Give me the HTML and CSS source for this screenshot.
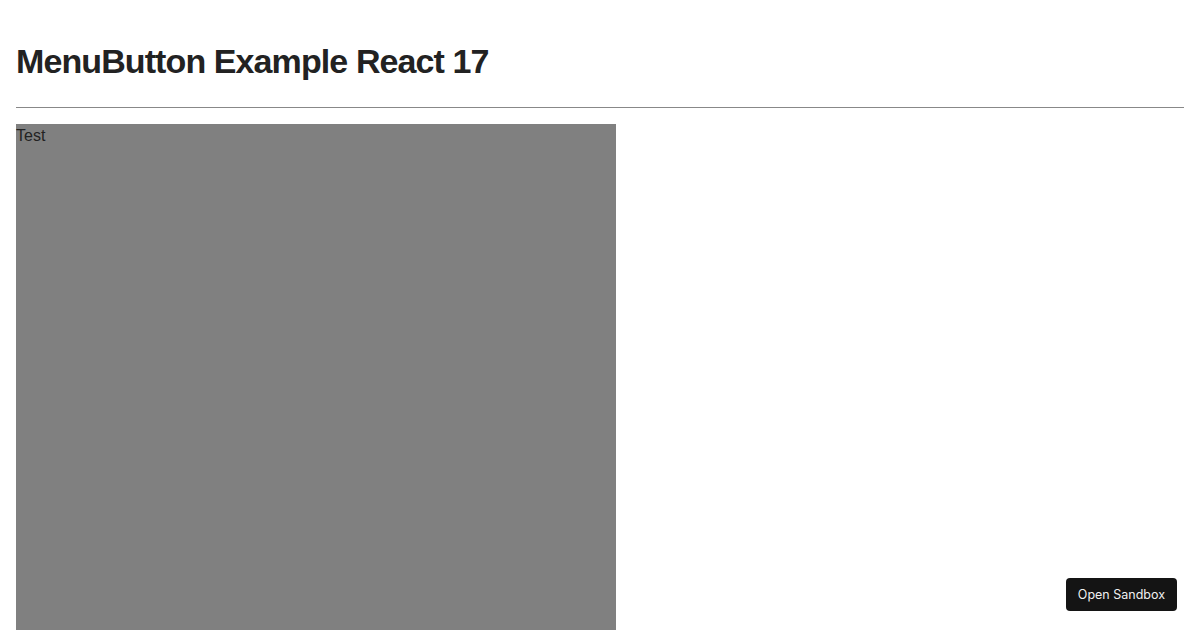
FILE: index.html
```html
<!DOCTYPE html>
<html lang="en">
<head>
  <meta charset="UTF-8" />
  <meta name="viewport" content="width=device-width, initial-scale=1" />
  <title>MenuButton Example React 17</title>
  <link rel="stylesheet" href="styles.css">
</head>
<body>

  <div id="root">
    <h1>MenuButton Example React 17</h1>
    <hr />
    <div class="box">Test</div>
  </div>

  <a class="sandbox-btn" href="#">Open Sandbox</a>

</body>
</html>
```

FILE: styles.css
```css
* {
  box-sizing: border-box;
}

body {
  margin: 0;
  padding: 16px;
  font-family: 'Liberation Sans', Arial, sans-serif;
  color: #222;
  background: #fff;
  overflow: hidden;
}

h1 {
  font-size: 34px;
  font-weight: bold;
  letter-spacing: -0.9px;
  margin: 26px 0 26px;
  line-height: 1.15;
}

hr {
  border: none;
  border-top: 1px solid #888;
  margin: 0 0 16px;
}

.box {
  width: 600px;
  height: 600px;
  background: #808080;
  font-size: 16px;
  line-height: 1.5;
}

.sandbox-btn {
  position: fixed;
  right: 23px;
  bottom: 19px;
  background: #141414;
  color: #f0f0f0;
  font-family: Inter, 'Liberation Sans', sans-serif;
  font-size: 12.5px;
  padding: 9px 12px;
  border-radius: 4px;
  text-decoration: none;
}
```
